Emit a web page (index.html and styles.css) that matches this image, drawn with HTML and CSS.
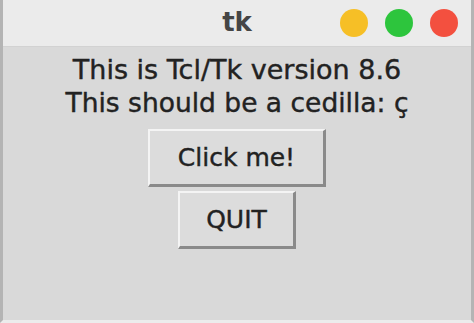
FILE: index.html
```html
<!DOCTYPE html>
<html>
<head>
    <title>tk</title>
    <link rel="stylesheet" href="styles.css">
</head>
<body>
    <div class="window">
        <div class="titlebar">
            <span></span>
            <span class="title">tk</span>
            <div class="controls">
                <span class="dot yellow"></span>
                <span class="dot green"></span>
                <span class="dot red"></span>
            </div>
        </div>
        <div class="content">
            <p class="label">This is Tcl/Tk version 8.6</p>
            <p class="label">This should be a cedilla: ç</p>
            <button class="tk-button click">Click me!</button>
            <button class="tk-button quit">QUIT</button>
        </div>
    </div>
</body>
</html>
```

FILE: styles.css
```css
html, body {
    margin: 0;
    padding: 0;
    background-color: #d9d9d9;
}
.window {
    width: 474px;
    height: 323px;
    box-sizing: border-box;
    border-left: 3px solid #b4b4b4;
    border-right: 3px solid #b4b4b4;
    border-bottom: 3px solid #ececec;
    display: flex;
    flex-direction: column;
    font-family: "DejaVu Sans", sans-serif;
    color: #222;
}
.titlebar {
    height: 47px;
    display: grid;
    grid-template-columns: 1fr auto 1fr;
    align-items: center;
    background-color: #ebebeb;
    border-bottom: 1px solid #d2d2d2;
    box-sizing: border-box;
}
.title {
    font-size: 26px;
    font-weight: bold;
    color: #454545;
    padding-bottom: 3px;
}
.controls {
    display: flex;
    justify-content: flex-end;
    gap: 17px;
    padding-right: 13px;
}
.dot {
    width: 28px;
    height: 28px;
    border-radius: 50%;
}
.yellow {
    background-color: #f6bf26;
}
.green {
    background-color: #2dc53d;
}
.red {
    background-color: #f3503f;
}
.content {
    flex: 1;
    display: flex;
    flex-direction: column;
    align-items: center;
    padding-top: 6px;
}
.label {
    margin: 0;
    font-size: 27px;
    line-height: 33px;
    -webkit-text-stroke: 0.4px #222;
}
.label + .label {
    font-size: 26.5px;
}
.tk-button {
    font-family: "DejaVu Sans", sans-serif;
    font-size: 25px;
    color: #222;
    -webkit-text-stroke: 0.4px #222;
    background-color: #dcdcdc;
    height: 58px;
    border-style: solid;
    border-width: 2px 3px 3px 2px;
    border-color: #f4f4f4 #8a8a8a #8a8a8a #f4f4f4;
    padding: 0;
}
.click {
    width: 178px;
    margin-top: 10px;
}
.quit {
    width: 118px;
    margin-top: 4px;
}
```
